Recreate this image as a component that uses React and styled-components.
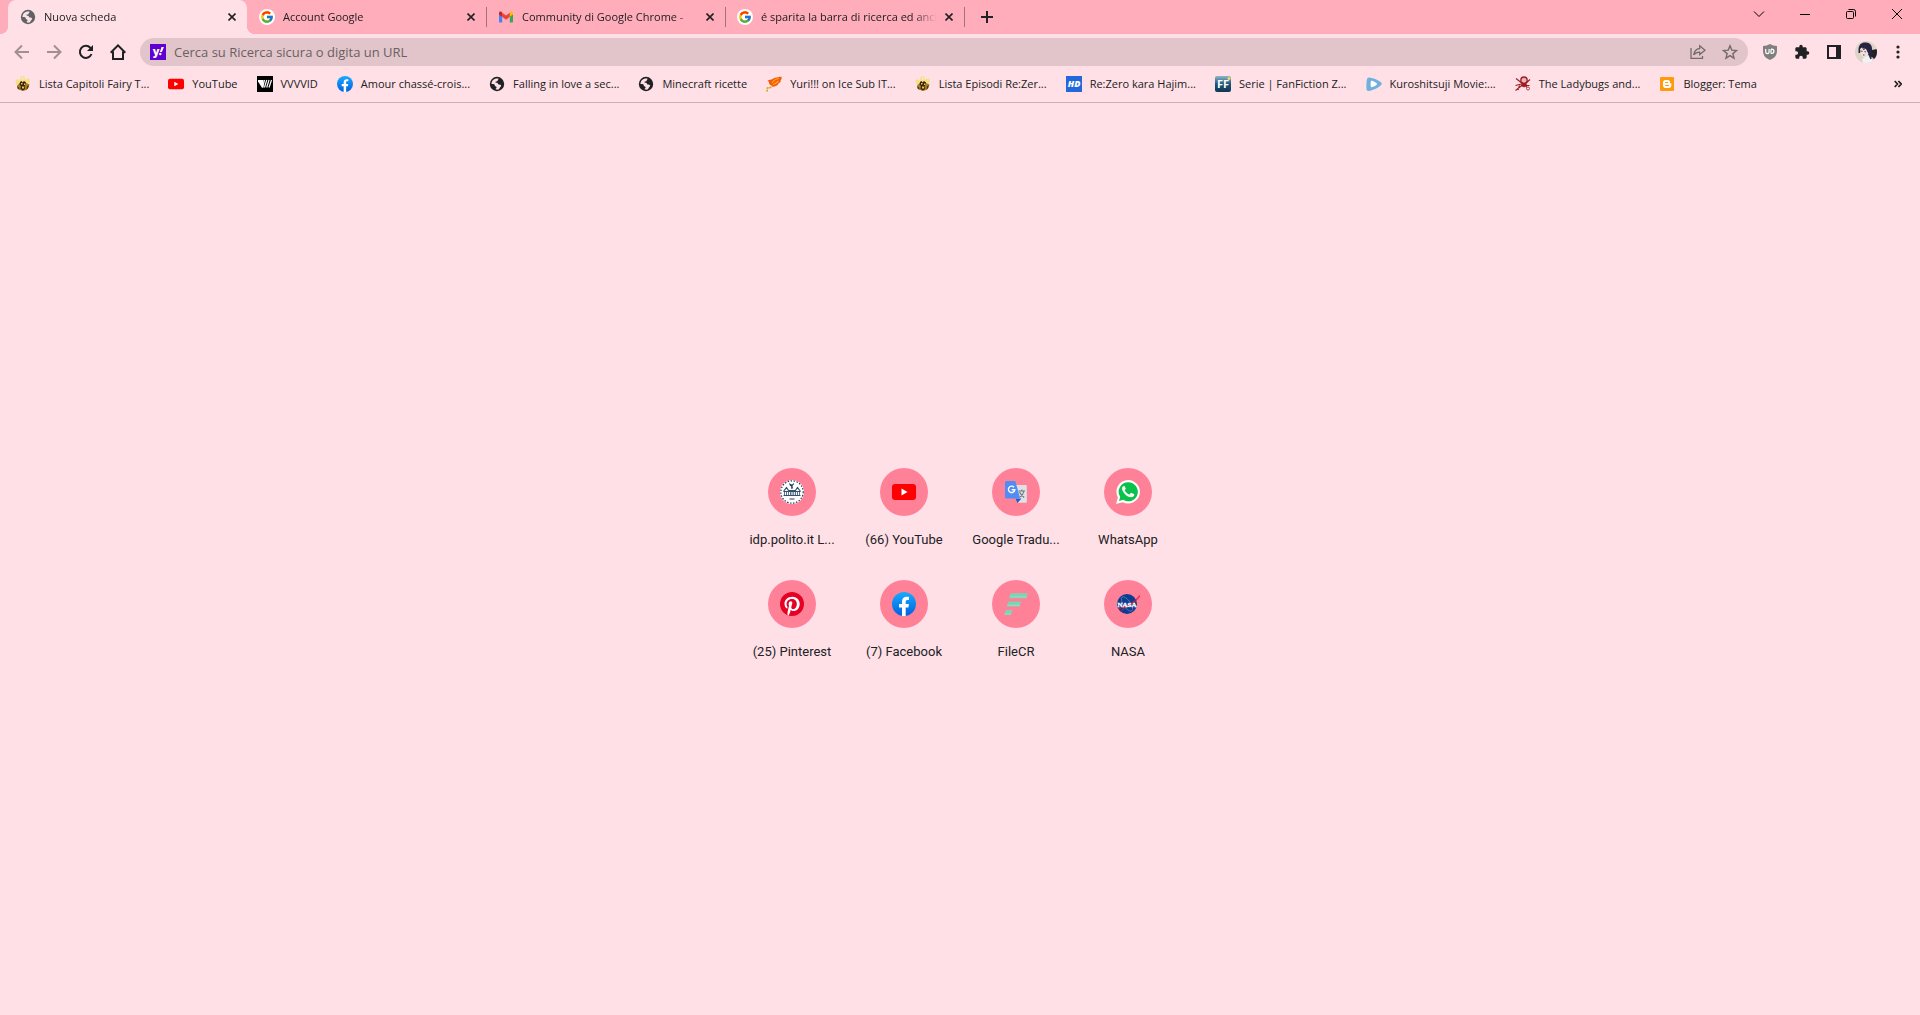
import React from 'react'
import styled, { createGlobalStyle, css } from 'styled-components'
import { FcGoogle } from 'react-icons/fc'

const tabs = [
  { title: 'Nuova scheda', icon: 'globe', active: true },
  { title: 'Account Google', icon: 'google' },
  { title: 'Community di Google Chrome -', icon: 'gmail' },
  { title: 'é sparita la barra di ricerca ed anche', icon: 'google' },
]

const bookmarks = [
  { title: 'Lista Capitoli Fairy T...', icon: 'bee' },
  { title: 'YouTube', icon: 'youtube' },
  { title: 'VVVVID', icon: 'vvvvid' },
  { title: 'Amour chassé-crois...', icon: 'facebook' },
  { title: 'Falling in love a sec...', icon: 'globe' },
  { title: 'Minecraft ricette', icon: 'globe' },
  { title: 'Yuri!!! on Ice Sub IT...', icon: 'fairy' },
  { title: 'Lista Episodi Re:Zer...', icon: 'bee' },
  { title: 'Re:Zero kara Hajim...', icon: 'hd' },
  { title: 'Serie | FanFiction Z...', icon: 'ff' },
  { title: 'Kuroshitsuji Movie:...', icon: 'play' },
  { title: 'The Ladybugs and...', icon: 'ladybug' },
  { title: 'Blogger: Tema', icon: 'blogger' },
]

const shortcuts = [
  { title: 'idp.polito.it L...', icon: 'polito' },
  { title: '(66) YouTube', icon: 'youtube' },
  { title: 'Google Tradu...', icon: 'translate' },
  { title: 'WhatsApp', icon: 'whatsapp' },
  { title: '(25) Pinterest', icon: 'pinterest' },
  { title: '(7) Facebook', icon: 'facebook' },
  { title: 'FileCR', icon: 'filecr' },
  { title: 'NASA', icon: 'nasa' },
]

const Globe = () => (
  <svg viewBox='0 0 16 16'>
    <circle cx='8' cy='8' r='7.2' fill='currentColor' />
    <path
      d='M2.400 7.800C2.500 5.200 4.400 3 7 2.500c.9-.1 1.900-.1 2.700.2-.2.700-.9 1-1 1.700-.1.800-1 .9-1.600 1-.7.1-.8.900-.3 1.200.5.300 1.300 0 1.800.5.400.5.300 1.200 1.100 1.300.9.1 2.200.2 2.400 1.200.2.900-.6 1.300-1.100 1.900-.6.700-.7 1.700-1.600 2.100-.7.2-1.500.2-2.200 0-.6-.1-.8-.6-.3-1 .5-.5.900-.9.600-1.500-.3-.5-1.100-.5-1.500-1-.3-.5 0-1.200-.6-1.600-.8-.5-2 .1-3-.700z'
      fill='#ffe0e6'
    />
  </svg>
)

const GoogleLogo = () => (
  <Disc>
    <FcGoogle size={14} />
  </Disc>
)

const Gmail = () => (
  <svg viewBox='0 0 16 16'>
    <path d='M1 4.200v8.300c0 .6.4 1 1 1h2.200V7.200z' fill='#4285f4' />
    <path d='M15 4.200v8.300c0 .6-.4 1-1 1h-2.200V7.200z' fill='#34a853' />
    <path d='M11.800 3.800v4L15 5.400V4c0-1.400-1.500-2-2.400-1.200z' fill='#fbbc04' />
    <path d='M4.200 7.800v-4L8 6.600l3.800-2.800v4L8 10.700z' fill='#ea4335' />
    <path d='M1 4v1.400l3.200 2.400v-4l-.8-1C2.500 2 1 2.600 1 4z' fill='#c5221f' />
  </svg>
)

const Youtube = () => (
  <svg viewBox='0 0 24 24'>
    <rect y='4' width='24' height='16' rx='3' fill='#f00' />
    <path d='M9.500 8.600v6.800l6-3.400z' fill='#fff' />
  </svg>
)

const Facebook = () => (
  <svg viewBox='0 0 24 24'>
    <defs>
      <linearGradient id='fb' x2='0' y2='1'>
        <stop stopColor='#19aaff' />
        <stop offset='1' stopColor='#0062e0' />
      </linearGradient>
    </defs>
    <circle cx='12' cy='12' r='12' fill='url(#fb)' />
    <path d='M10 23.900V15.500H7V12h3V9.400C10 6.400 11.800 4.700 14.500 4.700c1.200 0 2.500.2 2.500.2v3h-1.500c-1.400 0-1.800.8-1.800 1.700V12h3.200l-.5 3.500h-2.700v8.400z' fill='#fff' />
  </svg>
)

const Bee = () => (
  <svg viewBox='0 0 16 16'>
    <path d='M1 3.500l2.500 0L5 5l.5-3.500L7.500 0l2 1 .5 3 2-1.500 2.500.5.500 2.500-1.500 2.500-8 2-4-1.500L.5 6z' fill='#f6dd86' />
    <path d='M2 9.500l3-2.500 6 0 3.500 1.500-1 3-2 2.500-4 1-3.500-1.500z' fill='#a97e24' />
    <path d='M5 6l1.500-1 1 1.500L9 5l2 1.500v2L9.500 10 10 13l-2 1.500L5.500 13 6 10 4.500 8.500z' fill='#33240f' />
    <path d='M6 7h1.500v1.500H6zM9 7.500h1.500V9H9zM7 10.500h2v2H7z' fill='#f3c54e' />
    <path d='M2 10l2 1.500.5 2.500-2-1.500zM12 10l2-.5-1.500 3.500-1 .5z' fill='#4b3818' />
    <path d='M7 1.500h1.500v2H7z' fill='#fff3c4' />
  </svg>
)

const Vvvvid = () => (
  <svg viewBox='0 0 16 16'>
    <path d='M0 0h16v16H0z' fill='#000' />
    <path d='M1 4h5.500v7.500H4.800L1 5.500z' fill='#fff' />
    <path d='M7.500 4l-2 7.500M9.700 4l-2.200 7.500M12 4L9.700 11.500M14.500 4l-2.500 7.500' stroke='#fff' strokeWidth='1.200' />
  </svg>
)

const Fairy = () => (
  <svg viewBox='0 0 16 16'>
    <path d='M15.500.5c-2 1-3 .2-5 1C8.500 1.500 7 3 5.500 3.500 4 4 2.500 3.500 1.500 5c1 .3 1.500.5 1.500 1.500C3 8 4 9 5.500 9.500c.5 1 2 2 4 .5 2.500-.5 2.500-2 3.500-3 1.500-.5 2-1.500 1.500-2.500 1-1 1.300-2.500 1-4z' fill='#f2590b' />
    <path d='M13 2.500C9.500 3 7.500 4.500 6 7M12.500 5C10.500 7 9 8 7 8.500' stroke='#ffae1c' strokeWidth='1.200' fill='none' />
    <path d='M1 15.500l.5-3.500 3-.5 2-2' stroke='#d3a600' strokeWidth='1.600' strokeDasharray='2 .7' fill='none' />
  </svg>
)

const Hd = () => (
  <svg viewBox='0 0 16 16'>
    <path d='M0 0h16v16H0z' fill='#2268dd' />
    <text x='8' y='11' textAnchor='middle' fontSize='9' fontWeight='800' fontStyle='italic' fontFamily='Open Sans, sans-serif' fill='#fff'>HD</text>
  </svg>
)

const Ff = () => (
  <svg viewBox='0 0 16 16'>
    <defs>
      <linearGradient id='ff' x2='0' y2='1'>
        <stop stopColor='#8fb6c9' />
        <stop offset='.5' stopColor='#1c5679' />
        <stop offset='1' stopColor='#0d3654' />
      </linearGradient>
    </defs>
    <rect width='16' height='16' rx='2' fill='url(#ff)' />
    <text x='8' y='12' textAnchor='middle' fontSize='11' fontWeight='700' fontFamily='Open Sans, sans-serif' fill='#fff'>FF</text>
    <circle cx='14' cy='2.500' r='1.500' fill='#f2dc5a' />
  </svg>
)

const Play = () => (
  <svg viewBox='0 0 16 16'>
    <path d='M1.500 2C3-.2 15.500 5 15.800 7.500 15.800 10.500 3.500 16.500 1 14.500 0 13 .2 4 1.500 2z' fill='#6fb0dc' />
    <path d='M5 5c.6-.9 6 1.800 6 3s-5.400 4-6 3-.6-5 0-6z' fill='#fff' />
  </svg>
)

const Ladybug = () => (
  <svg viewBox='0 0 16 16' fill='none' stroke='#9c1c22'>
    <circle cx='9' cy='4.200' r='3.200' strokeWidth='1.300' fill='#e9b3ba' />
    <path d='M7 7.500h4l1 2.500-3 1-2.500-1z' fill='#9c1c22' strokeWidth='.6' />
    <path d='M1 2.500l7 5.500M15 3.500L10 8M.5 14.500L8 8.500M4.500 9.500L3 14M10 9l2 2.500M.5 9.500l6-1.500M11 9.500l3.500 0' strokeWidth='1.100' />
    <circle cx='13' cy='12.500' r='1.500' fill='#ffe9ee' strokeWidth='.8' />
  </svg>
)

const Blogger = () => (
  <svg viewBox='0 0 16 16'>
    <rect x='1' y='1' width='14' height='14' rx='1' fill='#ff9a0d' />
    <path d='M6.500 4h2.200C10.300 4 11 5 11 6.200c0 .9.2 1 .8 1 .3 0 .6.200.6.600V9.500C12.400 11 11.200 12 10 12H6.500C5 12 4 11 4 9.600V6.500C4 5 5 4 6.500 4z' fill='#fff' />
    <path d='M6.600 6.500h2M6.600 9.500h3' stroke='#ff9a0d' strokeWidth='1.100' strokeLinecap='round' />
  </svg>
)

const Polito = () => (
  <svg viewBox='0 0 24 24'>
    <circle cx='12' cy='12' r='12' fill='#fff' />
    <circle cx='12' cy='12' r='11.200' fill='none' stroke='#21405f' strokeWidth='1.200' strokeDasharray='1.500 1.500' />
    <path d='M9.500 2.500c.5 1.500 1.500 1.500 2.500 2l2-1.500c.3 1.500-1 2-1.500 3l.5 2.500-2 .3.3-2.300c-1.500-.5-2.300-2-1.800-4z' fill='#21405f' />
    <path d='M3.500 11.500L6.500 7.500l2 3h7l2-3 3 4M3.500 11.500h17M3.500 15.500h17' fill='none' stroke='#34506c' strokeWidth='1.200' />
    <path d='M4.500 12v3M6.500 12v3M8.500 10.500V15M10.500 12v3M12 12v3M13.700 12v3M15.500 10.500V15M17.500 12v3M19.500 12v3' stroke='#34506c' strokeWidth='.8' />
    <path d='M9.500 19h5' stroke='#21405f' strokeWidth='1' />
  </svg>
)

const Translate = () => (
  <svg viewBox='0 0 24 24'>
    <path d='M10 5h11.500c.8 0 1.300.5 1.300 1.300v15.200c0 .8-.5 1.300-1.300 1.300H14z' fill='#dfe1e5' />
    <path d='M11.500 18.500L13.500 23l4-4.500z' fill='#2a56c6' />
    <path d='M2.500 1h8.800l4.900 17.500H2.500C1.600 18.500 1 18 1 17.100V2.500C1 1.600 1.600 1 2.500 1z' fill='#4f8df5' />
    <path d='M10 7.200A3.200 3.200 0 1 0 10.800 9.800H7.700' fill='none' stroke='#fff' strokeWidth='1.400' />
    <path d='M14.500 11h6.500M17.800 9.500V11M20 11c-.6 3-2.400 5-4 6M15.500 12c1 2.300 2.700 4 4.700 5.500' fill='none' stroke='#6d7780' strokeWidth='1.100' />
  </svg>
)

const Whatsapp = () => (
  <svg viewBox='0 0 24 24'>
    <path d='M12.200 0A11.800 11.800 0 0 0 1.900 17.500L0 24l6.700-1.700A11.800 11.800 0 1 0 12.200 0z' fill='#fff' />
    <path d='M12.200 2.300a9.500 9.500 0 0 0-8 14.600L3 20.900l4.200-1.100A9.500 9.500 0 1 0 12.200 2.300z' fill='#08c24b' />
    <path d='M8.900 6.700c-.3-.6-.5-.6-.8-.6-1.200 0-2 1.300-2 2.400 0 3.500 4.800 8.800 9.200 8.800 1.500 0 2.900-.9 3-2.500 0-.4 0-.5-.4-.7l-2.400-1.200c-.3-.1-.5-.1-.7.2l-1 1.200c-.2.2-.4.2-.7.1-1.900-.8-3.400-2.100-4.300-3.900-.1-.3 0-.4.1-.6.400-.4 1-1 .8-1.400z' fill='#fff' />
  </svg>
)

const Pinterest = () => (
  <svg viewBox='0 0 24 24'>
    <circle cx='12' cy='12' r='12' fill='#e60023' />
    <path
      d='M7.600 23.200c-.1-1-.2-2.400 0-3.400l1.400-6s-.4-.7-.4-1.700c0-1.700 1-2.900 2.200-2.900 1 0 1.500.8 1.500 1.700 0 1-.7 2.600-1 4-.3 1.200.6 2.200 1.800 2.200 2.100 0 3.700-2.200 3.700-5.400 0-2.800-2-4.800-4.900-4.800-3.400 0-5.300 2.500-5.300 5.100 0 1 .4 2.100.9 2.700.1.100.1.200.1.300l-.3 1.400c0 .2-.2.300-.4.200-1.500-.7-2.400-2.900-2.400-4.600 0-3.800 2.700-7.200 7.900-7.200 4.100 0 7.300 2.900 7.300 6.900 0 4.100-2.600 7.400-6.200 7.400-1.200 0-2.300-.6-2.700-1.400l-.8 2.900c-.3 1-.9 2.200-1.400 2.900z'
      fill='#fff'
    />
  </svg>
)

const Filecr = () => (
  <svg viewBox='0 0 24 24' fill='#7fd3b2'>
    <path d='M6.500 1.200H24l-1.800 5H5zM4.300 9.500h13l-2 5H2.500zM1.800 18H8.500l-1.800 5H0z' />
    <path d='M6 5h17M3.500 13.300h12.500M1 22h6' stroke='#9fe0c6' strokeWidth='.8' />
  </svg>
)

const Nasa = () => (
  <svg viewBox='0 0 24 24'>
    <circle cx='11' cy='12' r='10' fill='#0b3d91' />
    <ellipse cx='11' cy='12' rx='3.500' ry='8.500' transform='rotate(-35 11 12)' fill='none' stroke='#6f8cc4' strokeWidth='.6' />
    <path d='M2 16.500c7-1 15-5 22-13-4 7-9 9-13.500 11.500C7.500 16.500 6 18 5 19.500' stroke='#e31937' strokeWidth='.9' fill='none' />
    <text x='11' y='14.500' textAnchor='middle' fontSize='7' fontWeight='700' fontFamily='Liberation Serif, serif' fill='#fff' stroke='#fff' strokeWidth='.3'>NASA</text>
  </svg>
)

const Yahoo = () => (
  <svg viewBox='0 0 16 16'>
    <path d='M0 0h16v16H0z' fill='#6001d2' />
    <text x='6' y='11' textAnchor='middle' fontSize='11' fontWeight='800' fontFamily='Open Sans, sans-serif' fill='#fff'>y</text>
    <path d='M11.500 3h2.400l-2 5H9.900z' fill='#fff' />
    <circle cx='10.300' cy='10' r='1.200' fill='#fff' />
  </svg>
)

const icons = {
  globe: Globe,
  google: GoogleLogo,
  gmail: Gmail,
  youtube: Youtube,
  facebook: Facebook,
  bee: Bee,
  vvvvid: Vvvvid,
  fairy: Fairy,
  hd: Hd,
  ff: Ff,
  play: Play,
  ladybug: Ladybug,
  blogger: Blogger,
  polito: Polito,
  translate: Translate,
  whatsapp: Whatsapp,
  pinterest: Pinterest,
  filecr: Filecr,
  nasa: Nasa,
  yahoo: Yahoo,
}

const SiteIcon = ({ name, size = 16, muted }) => {
  const Icon = icons[name]
  return (
    <IconBox $size={size} $muted={muted}>
      <Icon />
    </IconBox>
  )
}

const TabStrip = () => (
  <Strip>
    <TabList>
      {tabs.map((tab) => (
        <Tab key={tab.title} $active={tab.active}>
          <SiteIcon name={tab.icon} muted />
          <TabTitle>{tab.title}</TabTitle>
          <CloseTab aria-label='Chiudi scheda'>
            <svg width='8' height='8' viewBox='0 0 8 8' stroke='#202124' strokeWidth='1.600'>
              <path d='M.5.500l7 7M7.500.500l-7 7' />
            </svg>
          </CloseTab>
        </Tab>
      ))}
      <NewTab aria-label='Nuova scheda'>
        <svg width='12' height='12' viewBox='0 0 12 12' stroke='#202124' strokeWidth='2'>
          <path d='M6 0v12M0 6h12' />
        </svg>
      </NewTab>
    </TabList>
    <WindowControls>
      <WindowButton aria-label='Cerca schede'>
        <svg width='12' height='12' viewBox='0 0 12 12'>
          <path d='M1 3.500l5 5 5-5' />
        </svg>
      </WindowButton>
      <WindowButton aria-label='Riduci a icona'>
        <svg width='10' height='10' viewBox='0 0 10 10'>
          <path d='M0 5.500h10' />
        </svg>
      </WindowButton>
      <WindowButton aria-label='Ripristina'>
        <svg width='10' height='10' viewBox='0 0 10 10'>
          <rect x='.5' y='2.500' width='7' height='7' rx='1' />
          <path d='M2.500.500H7.500a2 2 0 0 1 2 2V7.500' />
        </svg>
      </WindowButton>
      <WindowButton aria-label='Chiudi'>
        <svg width='10' height='10' viewBox='0 0 10 10'>
          <path d='M0 0l10 10M10 0L0 10' />
        </svg>
      </WindowButton>
    </WindowControls>
  </Strip>
)

const Toolbar = () => (
  <Bar>
    <ToolButton aria-label='Indietro' $dim>
      <svg width='16' height='16' viewBox='0 0 16 16' fill='none' stroke='currentColor' strokeWidth='2'>
        <path d='M15 8H2M8 1.500L1.500 8 8 14.500' />
      </svg>
    </ToolButton>
    <ToolButton aria-label='Avanti' $dim>
      <svg width='16' height='16' viewBox='0 0 16 16' fill='none' stroke='currentColor' strokeWidth='2'>
        <path d='M1 8h13M8 1.500L14.500 8 8 14.500' />
      </svg>
    </ToolButton>
    <ToolButton aria-label='Ricarica'>
      <svg width='16' height='16' viewBox='0 0 16 16' fill='none' stroke='currentColor' strokeWidth='2'>
        <path d='M13.500 10A6 6 0 1 1 12.300 3.800L14 5.500' />
        <path d='M15 1v6H9z' fill='currentColor' stroke='none' />
      </svg>
    </ToolButton>
    <ToolButton aria-label='Home'>
      <svg width='16' height='16' viewBox='0 0 16 16' fill='none' stroke='currentColor' strokeWidth='2'>
        <path d='M.7 8.700L8 1.400l7.300 7.300M3 7.500V15h10V7.500' />
      </svg>
    </ToolButton>
    <Omnibox>
      <SiteIcon name='yahoo' />
      <Address aria-label='Barra degli indirizzi' placeholder='Cerca su Ricerca sicura o digita un URL' />
      <ToolButton aria-label='Condividi' $soft>
        <svg width='16' height='16' viewBox='0 0 16 16' fill='none' stroke='currentColor' strokeWidth='1.300'>
          <path d='M1 4v10.400h11.500V12' />
          <path d='M9.700 1.800L15 6.200l-5.300 4.400V8.200c-2.700 0-4.600.8-6 2.800.4-3.200 2.400-6 6-6.500z' />
        </svg>
      </ToolButton>
      <ToolButton aria-label='Aggiungi ai preferiti' $soft>
        <svg width='16' height='16' viewBox='0 0 16 16' fill='none' stroke='currentColor' strokeWidth='1.400'>
          <path d='M8 1.800l1.800 4.300 4.700.4-3.600 3.100 1.100 4.600L8 11.700l-4 2.500 1.100-4.600-3.600-3.100 4.700-.4z' />
        </svg>
      </ToolButton>
    </Omnibox>
    <ToolButton aria-label='Estensione'>
      <svg width='16' height='16' viewBox='0 0 16 16'>
        <path d='M8 0c2 1.300 4.500 2 7 2v5c0 4.500-3 7.500-7 9-4-1.500-7-4.500-7-9V2c2.500 0 5-.7 7-2z' fill='#808080' />
        <path d='M3.700 5v3a1.700 1.700 0 0 0 3.400 0V5M9 5.300v4.100M9 5.200h.8a2.100 2.100 0 0 1 0 4.200H9' fill='none' stroke='#fff' strokeWidth='1.200' />
      </svg>
    </ToolButton>
    <ToolButton aria-label='Estensioni'>
      <svg width='16' height='16' viewBox='0 0 24 24' fill='currentColor'>
        <path d='M20.500 11H19V7c0-1.100-.9-2-2-2h-4V3.500a2.500 2.500 0 0 0-5 0V5H4c-1.100 0-2 .9-2 2v3.800h1.500a2.700 2.700 0 0 1 0 5.400H2V20c0 1.100.9 2 2 2h3.800v-1.500a2.700 2.700 0 0 1 5.400 0V22H17c1.100 0 2-.9 2-2v-4h1.500a2.500 2.500 0 0 0 0-5z' />
      </svg>
    </ToolButton>
    <ToolButton aria-label='Pannello laterale'>
      <svg width='14' height='14' viewBox='0 0 14 14'>
        <path d='M1 1h12v12H1z' fill='none' stroke='currentColor' strokeWidth='2' />
        <path d='M9 1h4v12H9z' fill='currentColor' />
      </svg>
    </ToolButton>
    <ToolButton aria-label='Profilo'>
      <svg width='22' height='22' viewBox='0 0 22 22'>
        <clipPath id='face'>
          <circle cx='11' cy='11' r='11' />
        </clipPath>
        <g clipPath='url(#face)'>
          <path d='M0 0h22v22H0z' fill='#ddd3c6' />
          <path d='M17 9l5-1v8l-3 2-3-3z' fill='#242026' />
          <path d='M3.500 8C4 3 7 1 11 1.500c4 0 6 3 6 6.500l1 6-2 3-3-3-2-5-5-1-1 4-1.500 0z' fill='#252340' />
          <path d='M5 8l2-1.500 4 1.500 2.500 5-1.500 4-3 0-3-3z' fill='#f3e0d9' />
          <path d='M7 18l4-2 3-2 3 4 1 4H8z' fill='#f1f2f5' />
          <path d='M5.500 10l2 .3M9.500 10.500l1.500.5M7 6l2 3 .5-3.500M8 14h1.500' stroke='#3a3350' strokeWidth='.9' fill='none' />
          <path d='M14 13l2 5' stroke='#252340' strokeWidth='1.500' />
        </g>
      </svg>
    </ToolButton>
    <ToolButton aria-label='Menu'>
      <svg width='4' height='14' viewBox='0 0 4 14' fill='currentColor'>
        <circle cx='2' cy='2' r='1.600' />
        <circle cx='2' cy='7' r='1.600' />
        <circle cx='2' cy='12' r='1.600' />
      </svg>
    </ToolButton>
  </Bar>
)

const App = () => {
  return (
    <Page>
      <GlobalStyle />
      <TabStrip />
      <Toolbar />
      <BookmarkBar>
        {bookmarks.map((item) => (
          <Bookmark key={item.title} href='#'>
            <SiteIcon name={item.icon} />
            {item.title}
          </Bookmark>
        ))}
        <More aria-label='Altri preferiti'>
          <svg width='8' height='8' viewBox='0 0 8 8' fill='none' stroke='currentColor' strokeWidth='1.700'>
            <path d='M.7 1l2.800 3L.7 7M4.400 1l2.800 3-2.800 3' />
          </svg>
        </More>
      </BookmarkBar>
      <Content>
        <Grid>
          {shortcuts.map((item) => (
            <Tile key={item.title} href='#'>
              <Circle>
                <SiteIcon name={item.icon} size={24} />
              </Circle>
              {item.title}
            </Tile>
          ))}
        </Grid>
      </Content>
    </Page>
  )
}

const GlobalStyle = createGlobalStyle`
  * {
    box-sizing: border-box;
  }
  body {
    margin: 0;
    background: #ffe0e6;
    font-family: 'Open Sans', sans-serif;
    font-size: 11px;
    color: #202124;
  }
  button {
    padding: 0;
    border: 0;
    background: none;
    color: inherit;
    font: inherit;
  }
  a {
    color: inherit;
    text-decoration: none;
  }
`

const Page = styled.div`
  display: flex;
  flex-direction: column;
  min-height: 100vh;
`

const center = css`
  display: flex;
  align-items: center;
  justify-content: center;
  flex-shrink: 0;
`

const IconBox = styled.span`
  ${center}
  width: ${(props) => props.$size}px;
  height: ${(props) => props.$size}px;
  color: ${(props) => (props.$muted ? '#5f6368' : '#202124')};

  > svg {
    width: 100%;
    height: 100%;
  }
`

const Disc = styled.span`
  ${center}
  width: 16px;
  height: 16px;
  border-radius: 50%;
  background: white;
`

const Strip = styled.header`
  display: flex;
  justify-content: space-between;
  height: 34px;
  padding-left: 8px;
  background: #ffacbb;
`

const TabList = styled.div`
  display: flex;
  min-width: 0;
`

const Tab = styled.div`
  position: relative;
  display: flex;
  align-items: center;
  width: 239px;
  padding: 0 7px 0 12px;

  &:not(:first-child)::after {
    content: '';
    position: absolute;
    right: -1px;
    top: 7px;
    width: 1px;
    height: 20px;
    background: #a5727b;
  }

  ${(props) =>
    props.$active &&
    css`
      border-radius: 8px 8px 0 0;
      background: #ffe0e6;

      /* flared feet of the selected tab */
      &::before,
      &::after {
        content: '';
        position: absolute;
        bottom: 0;
        width: 8px;
        height: 8px;
      }
      &::before {
        left: -8px;
        background: radial-gradient(circle at 0 0, transparent 8px, #ffe0e6 8px);
      }
      &::after {
        right: -8px;
        background: radial-gradient(circle at 100% 0, transparent 8px, #ffe0e6 8px);
      }
    `}
`

const TabTitle = styled.span`
  flex: 1;
  min-width: 0;
  margin: 0 4px 0 8px;
  overflow: hidden;
  white-space: nowrap;
  line-height: 16px;
  mask-image: linear-gradient(to left, transparent, black 24px);
`

const CloseTab = styled.button`
  ${center}
  width: 16px;
  height: 16px;
`

const NewTab = styled.button`
  ${center}
  width: 28px;
  height: 34px;
  margin-left: 9px;
`

const WindowControls = styled.div`
  display: flex;
`

const WindowButton = styled.button`
  ${center}
  width: 46px;
  height: 28px;

  svg {
    fill: none;
    stroke: #000;
  }
`

const Bar = styled.div`
  display: flex;
  align-items: center;
  gap: 4px;
  padding: 4px 8px 0;
`

const ToolButton = styled.button`
  ${center}
  width: 28px;
  height: 28px;
  color: ${(props) => (props.$dim ? '#a28f93' : props.$soft ? '#756a6d' : '#202124')};
`

const Omnibox = styled.div`
  display: flex;
  align-items: center;
  gap: 4px;
  flex: 1;
  height: 28px;
  margin: 0 4px;
  padding: 0 4px 0 10px;
  border-radius: 14px;
  background: #e1c5ca;
`

const Address = styled.input`
  flex: 1;
  min-width: 0;
  height: 28px;
  padding: 0 4px;
  border: 0;
  outline: 0;
  background: none;
  font: 13px 'Open Sans', sans-serif;

  &::placeholder {
    color: #6b5f62;
    opacity: 1;
  }
`

const BookmarkBar = styled.nav`
  display: flex;
  align-items: center;
  gap: 19px;
  height: 37px;
  padding: 0 14px 0 15px;
  border-bottom: 1px solid #c9b1b6;
`

const Bookmark = styled.a`
  display: flex;
  align-items: center;
  gap: 8px;
  white-space: nowrap;
  line-height: 16px;
`

const More = styled.button`
  ${center}
  width: 16px;
  height: 28px;
  margin-left: auto;
`

const Content = styled.main`
  display: flex;
  flex: 1;
  align-items: center;
  justify-content: center;
  padding-top: 10px;
`

const Grid = styled.div`
  display: grid;
  grid-template-columns: repeat(4, 112px);
  grid-auto-rows: 112px;
`

const Tile = styled.a`
  display: flex;
  flex-direction: column;
  align-items: center;
  gap: 16px;
  padding-top: 16px;
  font-family: Roboto, sans-serif;
  font-size: 13px;
  line-height: 16px;
  white-space: nowrap;
`

const Circle = styled.span`
  ${center}
  width: 48px;
  height: 48px;
  border-radius: 50%;
  background: #ff8198;
`

export default App
